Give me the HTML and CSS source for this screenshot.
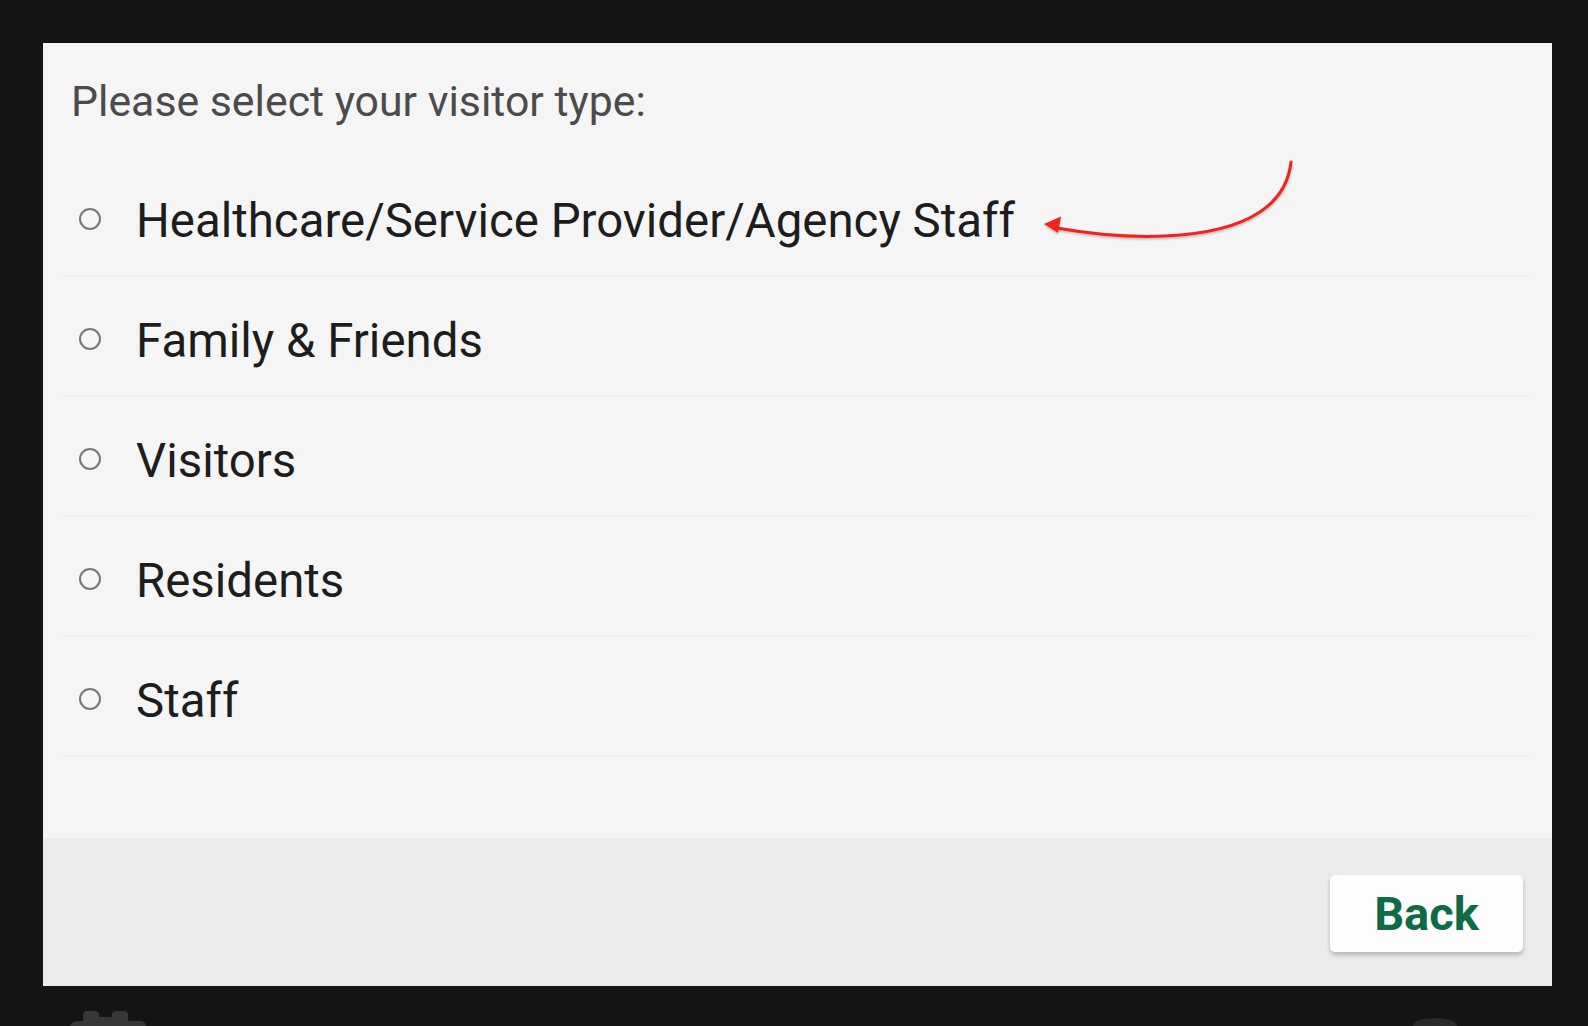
FILE: index.html
```html
<!DOCTYPE html>
<html lang="en">
<head>
<meta charset="utf-8">
<title>Visitor type</title>
<link rel="stylesheet" href="styles.css">
</head>
<body>
<div class="panel">
  <div class="content">
    <h1 class="title">Please select your visitor type:</h1>
    <ul class="options">
      <li class="option"><span class="radio"></span><span class="label">Healthcare/Service Provider/Agency Staff</span></li>
      <li class="option"><span class="radio"></span><span class="label">Family &amp; Friends</span></li>
      <li class="option"><span class="radio"></span><span class="label">Visitors</span></li>
      <li class="option"><span class="radio"></span><span class="label">Residents</span></li>
      <li class="option"><span class="radio"></span><span class="label">Staff</span></li>
    </ul>
  </div>
  <div class="footer">
    <button class="back">Back</button>
  </div>
  <svg class="annotation" width="300" height="110" viewBox="1020 150 300 110">
    <defs>
      <filter id="sh" x="-10%" y="-10%" width="120%" height="140%">
        <feDropShadow dx="0" dy="1.5" stdDeviation="1" flood-color="#000" flood-opacity="0.25"/>
      </filter>
    </defs>
    <g filter="url(#sh)">
      <path d="M1291 162 C1287 200 1255 232 1165 236 C1120 238 1085 233 1057 228" fill="none" stroke="#f4231d" stroke-width="3" stroke-linecap="round"/>
      <polygon points="1044,224 1061,216.5 1058,233" fill="#f4231d"/>
    </g>
  </svg>
</div>
<div class="navbar">
  <svg class="nav-left" width="80" height="18" viewBox="0 0 80 18">
    <path d="M13 18 V7 a4 4 0 0 1 4 -4 h8 a4 4 0 0 1 4 4 V9 h13 V7 a4 4 0 0 1 4 -4 h8 a4 4 0 0 1 4 4 V13 h12 a6 6 0 0 1 6 5 Z M0 18 a10 5 0 0 1 10 -5 h10 V18 Z" fill="#363636"/>
  </svg>
  <svg class="nav-right" width="44" height="8" viewBox="0 0 44 8">
    <path d="M0 8 a22 8 0 0 1 44 0 Z" fill="#2a2a2a"/>
  </svg>
</div>
</body>
</html>
```

FILE: styles.css
```css
html, body {
  margin: 0;
  padding: 0;
}

body {
  background: #141414;
  width: 1588px;
  height: 1026px;
  overflow: hidden;
  font-family: Roboto, "Liberation Sans", Arial, sans-serif;
}

.panel {
  position: relative;
  margin: 43px 0 0 43px;
  width: 1509px;
  height: 943px;
  background: #f5f5f5;
  display: flex;
  flex-direction: column;
}

.content {
  flex: 1;
  padding-top: 33px;
}

.title {
  margin: 0 0 0 28px;
  font-size: 42.8px;
  line-height: 50px;
  font-weight: 400;
  color: #4b4b4b;
}

.options {
  list-style: none;
  margin: 31px 22px 0 20px;
  padding: 0;
}

.option {
  box-sizing: border-box;
  height: 120px;
  padding: 5px 0 0 16px;
  display: flex;
  align-items: center;
  border-bottom: 2px solid #efefef;
}

.radio {
  box-sizing: border-box;
  width: 22px;
  height: 22px;
  border-radius: 50%;
  border: 2px solid #777777;
  flex: none;
}

.label {
  margin-left: 35px;
  padding-top: 5px;
  font-size: 47.4px;
  line-height: 55px;
  color: #1d1d1d;
}

.footer {
  height: 148px;
  background: #ebebeb;
  display: flex;
  justify-content: flex-end;
  align-items: flex-start;
  padding: 37px 29px 0 0;
  box-sizing: border-box;
}

.back {
  width: 193px;
  height: 77px;
  border: none;
  border-radius: 5px;
  background: #fdfdfd;
  box-shadow: 0 3px 4px rgba(0, 0, 0, 0.22);
  font-family: Roboto, "Liberation Sans", Arial, sans-serif;
  font-size: 47px;
  font-weight: 700;
  color: #0e6b45;
  padding: 0;
  line-height: 77px;
}

.annotation {
  position: absolute;
  left: 977px;
  top: 107px;
}

.navbar {
  display: flex;
  justify-content: space-between;
  align-items: flex-end;
  height: 40px;
  padding: 0 131px 0 70px;
}

.nav-left,
.nav-right {
  display: block;
}
```
